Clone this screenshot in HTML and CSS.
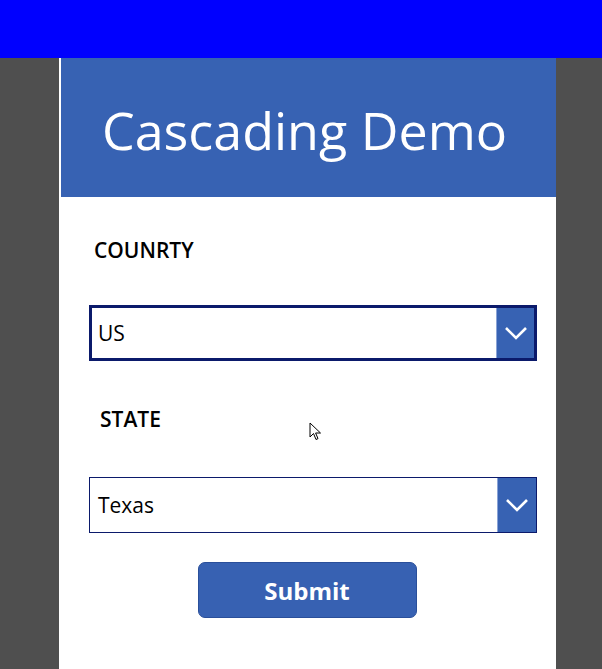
FILE: index.html
```html
<!DOCTYPE html>
<html>
<head>
<meta charset="utf-8">
<link rel="stylesheet" href="styles.css">
</head>
<body>
<div class="topbar"></div>
<div class="stage">
  <div class="panel">
    <div class="header"><h1>Cascading Demo</h1></div>
    <div class="form">
      <div class="label l1">COUNRTY</div>
      <div class="select focused">
        <span class="value">US</span>
        <span class="arrow"><svg width="24" height="14" viewBox="0 0 24 14"><path d="M2 2 L12 12 L22 2" fill="none" stroke="#fff" stroke-width="2.6"/></svg></span>
      </div>
      <div class="label l2">STATE</div>
      <div class="select second">
        <span class="value">Texas</span>
        <span class="arrow"><svg width="24" height="14" viewBox="0 0 24 14"><path d="M2 2 L12 12 L22 2" fill="none" stroke="#fff" stroke-width="2.6"/></svg></span>
      </div>
      <div class="actions"><button class="submit">Submit</button></div>
    </div>
  </div>
</div>
<svg class="cursor" width="13" height="20" viewBox="0 0 13 20"><path d="M1 1 L1 15 L4.5 11.5 L7 17.5 L9 16.6 L6.6 11 L11.5 11 Z" fill="#fff" stroke="#000" stroke-width="1"/></svg>
</body>
</html>
```
FILE: styles.css
```css
html, body { margin: 0; padding: 0; }
body {
  width: 602px; height: 669px; overflow: hidden;
  background: #4f4f4f;
  font-family: "Open Sans", "Noto Sans", sans-serif;
  position: relative;
}
.topbar { height: 58px; background: #0000ff; }
.stage { padding-left: 59px; }
.panel {
  width: 497px; height: 611px; background: #fff;
}
.header {
  margin-left: 2px;
  height: 139px;
  background: #3762b3;
  display: flex; align-items: center; justify-content: center;
}
.header h1 {
  margin: 0; padding-top: 4px; padding-right: 8px;
  color: #fff; font-weight: 400; font-size: 52px; letter-spacing: 0;
}
.form { padding: 0 19px 0 30px; }
.label { font-weight: 600; font-size: 21px; color: #000; line-height: 24px; }
.l1 { margin-top: 41px; padding-left: 5px; }
.l2 { margin-top: 46px; padding-left: 11px; }
.select {
  box-sizing: border-box;
  height: 56px;
  margin-top: 43px;
  border: 1px solid #0b1a6b;
  display: flex; align-items: stretch;
}
.select.second { margin-top: 46px; }
.select.focused { border: 3px solid #0b1a6b; }
.value { flex: 1; display: flex; align-items: center; padding-left: 8px; font-size: 21px; color: #000; }
.focused .value { padding-left: 6px; }
.arrow {
  width: 38px; background: #3762b3;
  border-left: 1px solid #8aa3d6;
  display: flex; align-items: center; justify-content: center;
}
.focused .arrow { width: 37px; }
.actions { display: flex; justify-content: center; margin-top: 29px; }
.submit {
  width: 219px; height: 56px;
  margin-right: 12px;
  background: #3761b2; border: 1px solid #2a4f9a; border-radius: 7px;
  color: #fff; font-family: "Open Sans", sans-serif; font-weight: 700; font-size: 24px;
}
.cursor { position: absolute; left: 309px; top: 422px; }
```
